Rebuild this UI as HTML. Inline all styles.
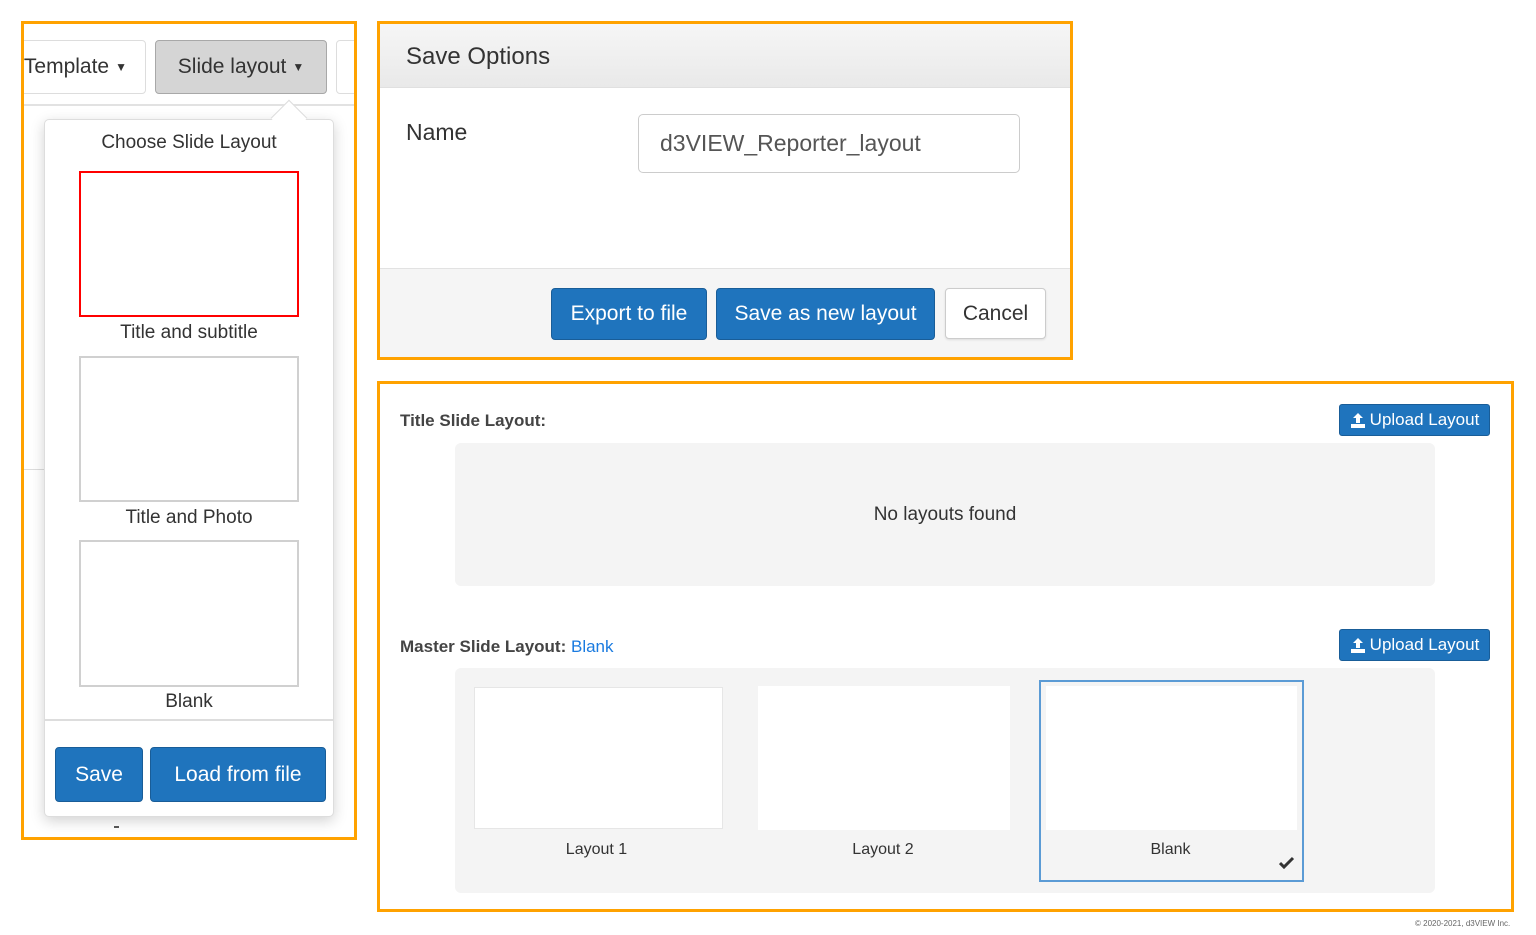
<!DOCTYPE html>
<html><head><meta charset="utf-8"><style>
*{box-sizing:border-box;margin:0;padding:0}
body{width:1536px;height:935px;background:#fff;position:relative;overflow:hidden;font-family:"Liberation Sans",Arial,sans-serif;color:#333}
.a{position:absolute}
.ob{position:absolute;border:3px solid #ffa200}
.btn{position:absolute;border-radius:4px;display:flex;align-items:center;justify-content:center}
.blue{background:#1f74bd;border:1px solid #195d98;color:#fff}
.thumb{position:absolute;background:#fff;border:2px solid #d0d0d0}
.lbl{position:absolute;text-align:center;font-size:19px;color:#333}
</style></head><body>

<!-- left panel -->
<div class="a" style="left:24px;top:24px;width:330px;height:813px;overflow:hidden">
<div class="a" style="left:-24px;top:-24px;width:400px;height:900px">
<div class="a" style="left:24px;top:104px;width:330px;height:2px;background:#e2e2e2"></div>
<div class="a" style="left:24px;top:469px;width:22px;height:1px;background:#ddd"></div>
<div class="btn" style="left:-10px;top:40px;width:156px;height:54px;border:1px solid #ddd;background:#fff;font-size:21px;color:#333;justify-content:flex-end;padding-right:18px">Template <span style="font-size:12px;margin-left:6px">▼</span></div>
<div class="btn" style="left:155px;top:40px;width:172px;height:54px;border:1px solid #a8a8a8;background:#d5d5d5;font-size:21px;color:#333">Slide layout <span style="font-size:12px;margin-left:6px">▼</span></div>
<div class="btn" style="left:336px;top:40px;width:40px;height:54px;border:1px solid #ddd;background:#fff"></div>
<div class="a" style="left:44px;top:119px;width:290px;height:698px;background:#fff;border:1px solid #ddd;border-radius:5px;box-shadow:0 4px 14px rgba(0,0,0,.18)"></div>
<div class="a" style="left:276px;top:105px;width:26px;height:26px;background:#fff;border-left:1px solid #ddd;border-top:1px solid #ddd;transform:rotate(45deg)"></div>
<div class="lbl" style="left:44px;top:132px;width:290px;font-size:19px">Choose Slide Layout</div>
<div class="thumb" style="left:79px;top:171px;width:220px;height:146px;border-color:#f00"></div>
<div class="lbl" style="left:44px;top:322px;width:290px">Title and subtitle</div>
<div class="thumb" style="left:79px;top:356px;width:220px;height:146px"></div>
<div class="lbl" style="left:44px;top:507px;width:290px">Title and Photo</div>
<div class="thumb" style="left:79px;top:540px;width:220px;height:147px"></div>
<div class="lbl" style="left:44px;top:691px;width:290px">Blank</div>
<div class="a" style="left:45px;top:719px;width:288px;height:2px;background:#ddd"></div>
<div class="btn blue" style="left:55px;top:747px;width:88px;height:55px;font-size:21px">Save</div>
<div class="btn blue" style="left:150px;top:747px;width:176px;height:55px;font-size:21px">Load from file</div>
<div class="a" style="left:114px;top:826px;width:5px;height:2px;background:#555"></div>
</div></div>
<div class="ob" style="left:21px;top:21px;width:336px;height:819px"></div>

<!-- save options -->
<div class="a" style="left:380px;top:24px;width:690px;height:64px;background:linear-gradient(#f6f6f6,#e9e9e9);border-bottom:1px solid #e0e0e0"></div>
<div class="a" style="left:406px;top:43px;font-size:24px;color:#333">Save Options</div>
<div class="a" style="left:406px;top:119px;font-size:23px;color:#333">Name</div>
<div class="a" style="left:638px;top:114px;width:382px;height:59px;border:1px solid #ccc;border-radius:5px;font-size:23px;color:#555;padding:15px 0 0 21px">d3VIEW_Reporter_layout</div>
<div class="a" style="left:380px;top:268px;width:690px;height:89px;background:#f5f5f5;border-top:1px solid #e2e2e2"></div>
<div class="btn blue" style="left:551px;top:288px;width:156px;height:52px;font-size:21px">Export to file</div>
<div class="btn blue" style="left:716px;top:288px;width:219px;height:52px;font-size:21px">Save as new layout</div>
<div class="btn" style="left:945px;top:288px;width:101px;height:51px;border:1px solid #ccc;background:#fff;font-size:21px;color:#333;box-shadow:0 1px 2px rgba(0,0,0,.1)">Cancel</div>
<div class="ob" style="left:377px;top:21px;width:696px;height:339px"></div>

<!-- bottom panel -->
<div class="a" style="left:400px;top:411px;font-size:17px;color:#444;font-weight:600">Title Slide Layout:</div>
<div class="btn blue" style="left:1339px;top:404px;width:151px;height:32px;font-size:17px;border-radius:3px"><svg width="16" height="15" viewBox="0 0 16 15" style="margin-right:4px"><path d="M8 0L3 5h3v5h4V5h3z M1 11h14v4H1z" fill="#fff"/></svg>Upload Layout</div>
<div class="a" style="left:455px;top:443px;width:980px;height:143px;background:#f4f4f4;border-radius:6px"></div>
<div class="a" style="left:455px;top:504px;width:980px;text-align:center;font-size:19px;color:#333">No layouts found</div>
<div class="a" style="left:400px;top:637px;font-size:17px;color:#444;font-weight:600">Master Slide Layout: <span style="color:#1a7be0;font-weight:normal">Blank</span></div>
<div class="btn blue" style="left:1339px;top:629px;width:151px;height:32px;font-size:17px;border-radius:3px"><svg width="16" height="15" viewBox="0 0 16 15" style="margin-right:4px"><path d="M8 0L3 5h3v5h4V5h3z M1 11h14v4H1z" fill="#fff"/></svg>Upload Layout</div>
<div class="a" style="left:455px;top:668px;width:980px;height:225px;background:#f4f4f4;border-radius:6px"></div>
<div class="a" style="left:474px;top:687px;width:249px;height:142px;background:#fff;border:1px solid #e6e6e6"></div>
<div class="a" style="left:472px;top:841px;width:249px;text-align:center;font-size:16px">Layout 1</div>
<div class="a" style="left:758px;top:686px;width:252px;height:144px;background:#fff"></div>
<div class="a" style="left:757px;top:841px;width:252px;text-align:center;font-size:16px">Layout 2</div>
<div class="a" style="left:1039px;top:680px;width:265px;height:202px;border:2px solid #5b9bd5"></div>
<div class="a" style="left:1046px;top:686px;width:251px;height:144px;background:#fff"></div>
<div class="a" style="left:1038px;top:841px;width:265px;text-align:center;font-size:16px">Blank</div>
<svg class="a" style="left:1279px;top:856px" width="16" height="13" viewBox="0 0 16 13"><path d="M1 7l4 4 9-9" stroke="#333" stroke-width="3" fill="none"/></svg>
<div class="ob" style="left:377px;top:381px;width:1137px;height:531px"></div>
<div class="a" style="left:1415px;top:919px;font-size:8px;color:#666">© 2020-2021, d3VIEW Inc.</div>
</body></html>
